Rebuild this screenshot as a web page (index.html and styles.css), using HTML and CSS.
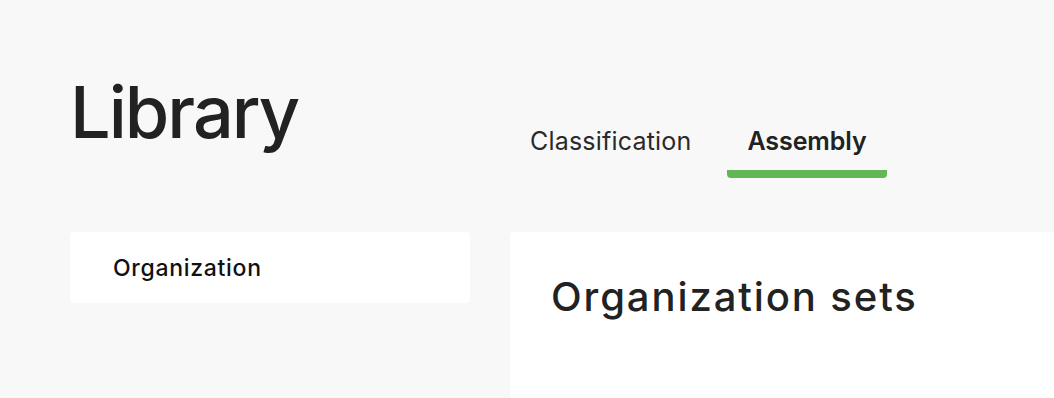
FILE: index.html
```html
<!DOCTYPE html>
<html>
<head>
<meta charset="utf-8">
<link rel="stylesheet" href="styles.css">
</head>
<body>
<div class="page">
  <header class="header">
    <h1 class="title">Library</h1>
    <nav class="tabs">
      <div class="tab">Classification</div>
      <div class="tab active">Assembly</div>
    </nav>
  </header>
  <main class="content">
    <aside class="side">
      <div class="side-item">Organization</div>
    </aside>
    <section class="panel">
      <h2 class="panel-title">Organization sets</h2>
    </section>
  </main>
</div>
</body>
</html>
```
FILE: styles.css
```css
html, body {
  margin: 0;
  padding: 0;
  background: #f8f8f8;
  font-family: "Inter", "Liberation Sans", sans-serif;
  color: #222;
  overflow: hidden;
}
.page {
  padding: 0 0 0 70px;
  height: 398px;
  box-sizing: border-box;
  overflow: hidden;
}
.header {
  display: flex;
  align-items: flex-start;
  height: 232px;
}
.title {
  margin: 72px 0 0 0;
  width: 440px;
  font-size: 72px;
  font-weight: 500;
  line-height: 80px;
  letter-spacing: -2px;
  color: #222;
}
.tabs {
  display: flex;
  gap: 16px;
  margin-top: 124px;
}
.tab {
  padding: 0 20px;
  height: 54px;
  line-height: 34px;
  padding-bottom: 12px;
  font-size: 25px;
  letter-spacing: 0.2px;
  color: #2a2a2a;
  box-sizing: border-box;
  border-bottom: 8px solid transparent;
  border-radius: 0 0 4px 4px;
}
.tab.active {
  font-weight: 600;
  letter-spacing: -0.1px;
  color: #222;
  border-bottom-color: #62b655;
}
.content {
  display: flex;
  gap: 40px;
  align-items: flex-start;
}
.side {
  width: 400px;
}
.side-item {
  background: #fff;
  border-radius: 4px;
  height: 71px;
  box-sizing: border-box;
  padding: 23px 43px;
  font-size: 23px;
  font-weight: 500;
  letter-spacing: 0.7px;
  color: #111;
  line-height: 26px;
}
.panel {
  flex: 1;
  background: #fff;
  border-radius: 4px 0 0 0;
  height: 170px;
  padding: 40px 41px;
  box-sizing: border-box;
}
.panel-title {
  margin: 0;
  font-size: 40px;
  font-weight: 500;
  line-height: 50px;
  letter-spacing: 1.9px;
  color: #222;
}
```
